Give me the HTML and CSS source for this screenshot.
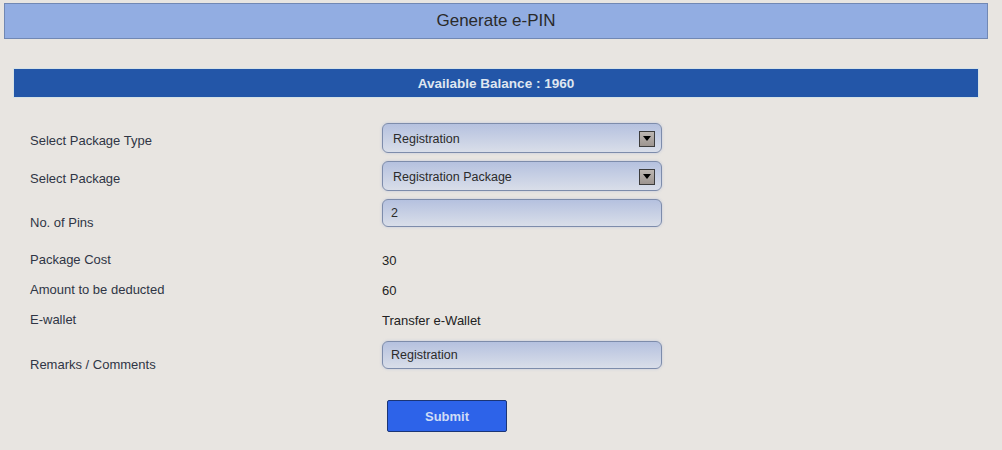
FILE: index.html
```html
<!DOCTYPE html>
<html>
<head>
<meta charset="utf-8">
<link rel="stylesheet" href="styles.css">
</head>
<body>
<div class="page">
  <div class="title-bar">Generate e-PIN</div>
  <div class="balance-bar">Available Balance : 1960</div>
  <form class="form">
    <div class="row row-select">
      <label class="lbl">Select Package Type</label>
      <div class="field select">
        <span class="select-text">Registration</span>
        <span class="arrow"><svg width="8" height="5" viewBox="0 0 8 5"><path d="M0 0h8L4 5z" fill="#000"/></svg></span>
      </div>
    </div>
    <div class="row row-select">
      <label class="lbl">Select Package</label>
      <div class="field select">
        <span class="select-text">Registration Package</span>
        <span class="arrow"><svg width="8" height="5" viewBox="0 0 8 5"><path d="M0 0h8L4 5z" fill="#000"/></svg></span>
      </div>
    </div>
    <div class="row row-pins">
      <label class="lbl">No. of Pins</label>
      <div class="field input">2</div>
    </div>
    <div class="row row-text">
      <span class="lbl">Package Cost</span>
      <span class="val">30</span>
    </div>
    <div class="row row-text">
      <span class="lbl">Amount to be deducted</span>
      <span class="val">60</span>
    </div>
    <div class="row row-text">
      <span class="lbl">E-wallet</span>
      <span class="val">Transfer e-Wallet</span>
    </div>
    <div class="row row-remarks">
      <label class="lbl">Remarks / Comments</label>
      <div class="field input">Registration</div>
    </div>
    <div class="actions">
      <button type="button" class="btn">Submit</button>
    </div>
  </form>
</div>
</body>
</html>
```
FILE: styles.css
```css
html, body {
  margin: 0;
  padding: 0;
  background: #e8e5e1;
}
body {
  font-family: "Liberation Sans", Arial, sans-serif;
  color: #333;
}
.page {
  width: 1002px;
  height: 450px;
  overflow: hidden;
  padding-top: 3px;
  box-sizing: border-box;
}
.title-bar {
  margin-left: 4px;
  width: 984px;
  height: 36px;
  box-sizing: border-box;
  background: #92ade2;
  border: 1px solid #7188b4;
  display: flex;
  align-items: center;
  justify-content: center;
  font-size: 17px;
  color: #2a2a2a;
}
.balance-bar {
  margin: 30px 0 0 14px;
  width: 964px;
  height: 28px;
  background: #2356a8;
  box-shadow: 0 0 0 1px #d6e2e6;
  display: flex;
  align-items: center;
  justify-content: center;
  font-size: 13.5px;
  font-weight: bold;
  color: #dfe6f0;
}
.form {
  margin: 26px 0 0 30px;
}
.row {
  display: grid;
  grid-template-columns: 352px 280px;
  font-size: 13px;
  color: #2f3545;
}
.lbl {
  line-height: 16px;
}
.row-select {
  height: 38px;
}
.row-select .lbl {
  padding-top: 10px;
}
.row-pins {
  height: 45px;
}
.row-pins .lbl {
  padding-top: 16px;
}
.row-text {
  height: 30px;
  align-items: center;
  padding-top: 2px;
  box-sizing: border-box;
}
.row-text .val {
  color: #222;
}
.row-remarks {
  margin-top: 7px;
  height: 59px;
}
.row-remarks .lbl {
  padding-top: 16px;
}
.field {
  box-sizing: border-box;
  border: 1px solid #7d8cab;
  border-radius: 6px;
  background: linear-gradient(#b5c1df, #d9dee9);
  box-shadow: 0 0 2px 1px rgba(200, 205, 220, 0.6);
  font-size: 12.5px;
  color: #2b2b2b;
  display: flex;
  align-items: center;
}
.select {
  height: 30px;
  padding-left: 10px;
  padding-top: 1px;
}
.select-text {
  flex: 1;
}
.arrow {
  width: 16px;
  height: 16px;
  box-sizing: border-box;
  margin-right: 6px;
  border: 1px solid #3c3c3c;
  background: linear-gradient(#bcb6b2, #9d9590);
  display: flex;
  align-items: center;
  justify-content: center;
}
.input {
  height: 28px;
  padding-left: 8px;
  align-items: flex-start;
  padding-top: 6px;
}
.actions {
  padding-left: 357px;
}
.btn {
  width: 120px;
  height: 32px;
  border: 1px solid #1b3575;
  border-radius: 2px;
  background: #2d63e9;
  color: #cfdcf6;
  font-family: "Liberation Sans", Arial, sans-serif;
  font-size: 13px;
  font-weight: bold;
  padding: 0;
}
```
